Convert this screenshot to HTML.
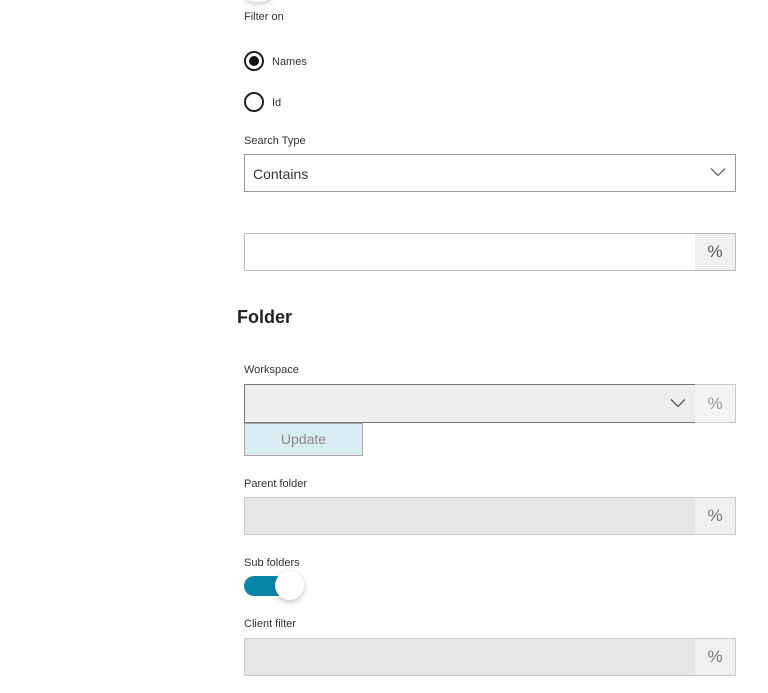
<!DOCTYPE html>
<html><head><meta charset="utf-8"><style>
body{margin:0;width:768px;height:693px;background:#fff;font-family:"Liberation Sans",sans-serif;color:#333;position:relative;overflow:hidden}
.a{position:absolute}
.lbl{font-size:11px;color:#333}
.box{box-sizing:border-box;border:1px solid #aaa}
.pct{font-size:17px;color:#555;text-align:center}
</style></head><body>
<div class="a" style="left:244px;top:-12px;width:28px;height:14px;border-radius:50%;box-shadow:0 2px 6px rgba(0,0,0,.2)"></div>
<div class="a lbl" style="left:244px;top:11px">Filter on</div>
<div class="a" style="left:244px;top:51px;width:20px;height:20px;box-sizing:border-box;border:2px solid #222;border-radius:50%"></div>
<div class="a" style="left:249px;top:56px;width:10px;height:10px;background:#111;border-radius:50%"></div>
<div class="a lbl" style="left:272px;top:56px">Names</div>
<div class="a" style="left:244px;top:92px;width:20px;height:20px;box-sizing:border-box;border:2px solid #222;border-radius:50%"></div>
<div class="a lbl" style="left:272px;top:97px">Id</div>
<div class="a lbl" style="left:244px;top:135px">Search Type</div>
<div class="a box" style="left:244px;top:154px;width:492px;height:38px;border-color:#999"></div>
<div class="a" style="left:253px;top:166px;font-size:14px;color:#333">Contains</div>
<svg class="a" style="left:710px;top:167px" width="16" height="10"><path d="M1 1.5L8 8.5L15 1.5" fill="none" stroke="#666" stroke-width="1.3"/></svg>
<div class="a box" style="left:244px;top:233px;width:492px;height:38px;border-color:#bbb"></div>
<div class="a pct" style="left:695px;top:234px;width:40px;height:36px;line-height:36px;background:#f0f0f0">%</div>
<div class="a" style="left:237px;top:307px;font-size:18px;font-weight:bold;color:#222">Folder</div>
<div class="a lbl" style="left:244px;top:364px">Workspace</div>
<div class="a box" style="left:244px;top:384px;width:452px;height:39px;border-color:#777;background:#eee"></div>
<svg class="a" style="left:670px;top:398px" width="16" height="10"><path d="M1 1.5L8 8.5L15 1.5" fill="none" stroke="#555" stroke-width="1.3"/></svg>
<div class="a box pct" style="left:695px;top:384px;width:41px;height:39px;line-height:37px;border-color:#ccc;border-left:none;background:#f4f4f4;color:#999">%</div>
<div class="a box" style="left:244px;top:423px;width:119px;height:33px;background:#d9ecf3;border-color:#aaa;color:#888;font-size:14px;text-align:center;line-height:31px">Update</div>
<div class="a lbl" style="left:244px;top:478px">Parent folder</div>
<div class="a box" style="left:244px;top:497px;width:492px;height:38px;border-color:#ccc;background:#e6e6e6"></div>
<div class="a pct" style="left:695px;top:498px;width:40px;height:36px;line-height:36px;background:#f0f0f0;color:#777">%</div>
<div class="a lbl" style="left:244px;top:557px">Sub folders</div>
<div class="a" style="left:244px;top:576px;width:46px;height:20px;border-radius:10px;background:#0a86a8"></div>
<div class="a" style="left:275px;top:571px;width:29px;height:29px;border-radius:50%;background:#fff;box-shadow:0 2px 6px rgba(0,0,0,.25)"></div>
<div class="a lbl" style="left:244px;top:618px">Client filter</div>
<div class="a box" style="left:244px;top:638px;width:492px;height:38px;border-color:#ccc;background:#e6e6e6"></div>
<div class="a pct" style="left:695px;top:639px;width:40px;height:36px;line-height:36px;background:#f0f0f0;color:#777">%</div>
</body></html>
